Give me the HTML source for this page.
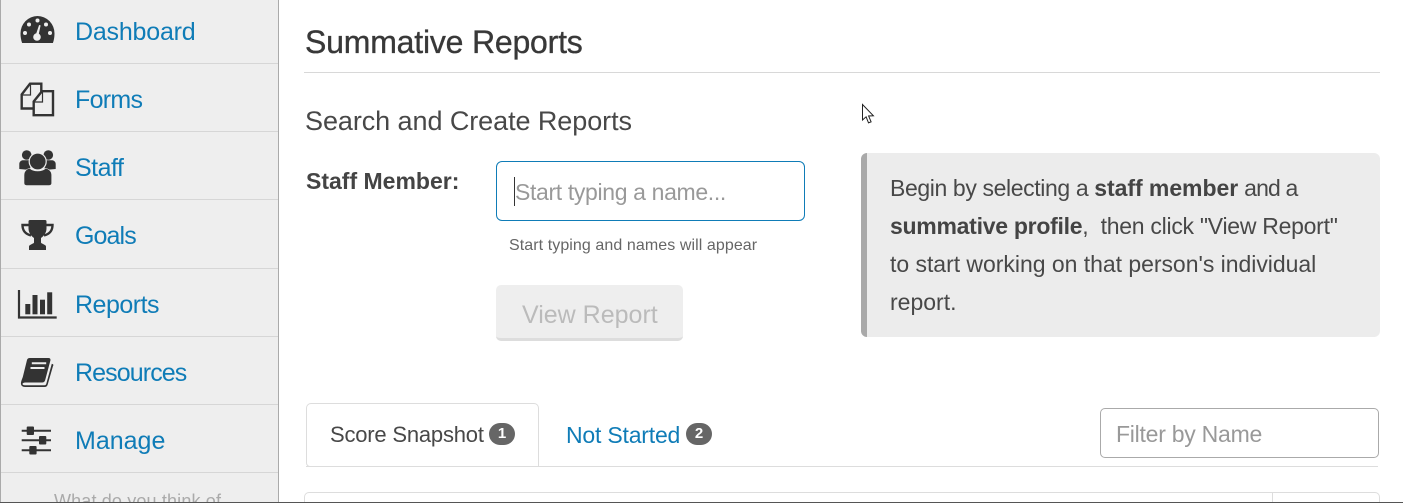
<!DOCTYPE html>
<html lang="en">
<head>
<meta charset="utf-8">
<title>Summative Reports</title>
<style>
html,body{margin:0;padding:0;background:#fff;width:1403px;height:503px;overflow:hidden}
#root{position:relative;width:1403px;height:503px;overflow:hidden;font-family:"Liberation Sans",Arial,sans-serif;color:#444}
.b{position:absolute;box-sizing:border-box}
.t{position:absolute;line-height:30px;height:30px;white-space:nowrap}
.nav{font-size:25px;color:#0f7cb7;left:75px}
.sep{position:absolute;left:1px;width:277px;height:1px;background:#d6d6d6}
.c{font-size:23px;left:890px;color:#484848}
.c b{color:#444}
svg{position:absolute;left:0;top:0}
</style>
</head>
<body>
<div id="root">
<div class="b" style="left:0;top:0;width:279px;height:503px;background:#eee;border-left:1px solid #aaa;border-right:1px solid #aaa"></div>
<div class="sep" style="top:63px"></div>
<div class="sep" style="top:131px"></div>
<div class="sep" style="top:199px"></div>
<div class="sep" style="top:268px"></div>
<div class="sep" style="top:336px"></div>
<div class="sep" style="top:404px"></div>
<div class="sep" style="top:472px"></div>

<a class="t nav" style="top:17px;letter-spacing:-.2px">Dashboard</a>
<a class="t nav" style="top:85px;letter-spacing:-.7px">Forms</a>
<a class="t nav" style="top:153px;letter-spacing:-.5px">Staff</a>
<a class="t nav" style="top:221px;letter-spacing:-.9px">Goals</a>
<a class="t nav" style="top:290px;letter-spacing:-.5px">Reports</a>
<a class="t nav" style="top:358px;letter-spacing:-.9px">Resources</a>
<a class="t nav" style="top:426px">Manage</a>
<div class="t" style="left:54px;top:486px;font-size:18px;color:#aaa;letter-spacing:.15px">What do you think of</div>

<svg width="279" height="503" viewBox="0 0 279 503">
 <!-- Dashboard -->
 <path d="M20.500 33.500a17 17.500 0 0 1 34 0c0 3.500-.6 6.800-1.600 9.500H22.100c-1-2.700-1.600-6-1.600-9.500z" fill="#333"/>
 <g fill="#eee"><circle cx="29" cy="24.500" r="2"/><circle cx="37.500" cy="20.500" r="2"/><circle cx="46" cy="24.500" r="2"/><circle cx="25" cy="33" r="2"/><circle cx="50" cy="33" r="2"/><circle cx="37" cy="37" r="3.800"/><path d="M35.700 35l3.400-10 1.500.4-2.200 10.400z"/></g>
 <!-- Forms -->
 <g fill="none" stroke="#333" stroke-width="2.400">
  <path d="M21.700 94.500L30 83.700h11.300v24.800H21.700z"/>
  <path d="M33.700 101.500L42 91.200h11v24h-19.300z" fill="#eee"/>
  <path d="M22 95h8.500v-11M34 102h8.500V91.500" stroke-width="1.200"/>
 </g>
 <!-- Staff -->
 <g fill="#333">
  <circle cx="26.700" cy="155" r="4.800"/><circle cx="48.300" cy="155" r="4.800"/>
  <path d="M19.300 169v-5c0-2.500 2-3.800 4-3.800h7v9.800zM55.700 169v-5c0-2.500-2-3.800-4-3.800h-7v9.800z"/>
 </g>
 <circle cx="37.700" cy="161.500" r="8.500" fill="#333" stroke="#eee" stroke-width="1.200"/>
 <path d="M24 183v-8c0-4 3-6.500 6-6.500 2 1.700 4.700 2.500 7.700 2.500s5.700-.8 7.700-2.500c3 0 6.300 2.500 6.300 6.500v8c0 1.500-1 2.500-2.500 2.500h-22.700c-1.500 0-2.500-1-2.500-2.500z" fill="#333" stroke="#eee" stroke-width=".6"/>
 <!-- Trophy -->
 <path d="M28.500 221.500c0-1 .6-1.500 1.500-1.500h15c1 0 1.500.5 1.500 1.500v7c0 5-3.500 8-5.500 9.500v4.500c0 1.300 5 2 5 4v3.500H29v-3.500c0-2 5-2.700 5-4V238c-2-1.500-5.500-4.500-5.500-9.500z" fill="#333"/>
 <path d="M29.500 225h-7c0 6 3 9 8.500 10.500M45.500 225h7c0 6-3 9-8.500 10.500" fill="none" stroke="#333" stroke-width="2.400"/>
 <!-- Reports -->
 <path d="M19 290v27.500h37.700" fill="none" stroke="#333" stroke-width="2.200"/>
 <g fill="#333"><rect x="25.300" y="304" width="5" height="10.300"/><rect x="32.500" y="295" width="5" height="19.300"/><rect x="40" y="299.700" width="5" height="14.600"/><rect x="47.200" y="292.300" width="5" height="22"/></g>
 <!-- Book -->
 <path d="M29.800 358h18.700c1.600 0 2.200 1 1.900 2.500l-5.200 19.500c-.4 1.500-1.300 2.500-3 2.500H25.500c-2 0-3 .7-3 1.500s1 1.200 2.500 1.200h19.500c1 0 1.500-.5 1.800-1.500l5.500-20 1.200.5c.5.500.5 1-.2 2.500l-5 17.500c-.5 1.800-1.500 2.800-3.300 2.800H25c-2.800 0-4.500-1.700-4-4.500.2-1.300 1-3.500 1.800-5.500L27 360c.4-1.300 1.300-2 2.800-2z" fill="#333"/>
 <path d="M31.800 363.300h14.400M30.500 368h14" stroke="#eee" stroke-width="2" fill="none"/>
 <!-- Manage -->
 <g stroke="#333" stroke-width="2" fill="none"><path d="M21.700 430.700H51M21.700 440.300H51M21.700 450.300H51"/></g>
 <g fill="#333"><rect x="26.700" y="426.500" width="7.300" height="8.500" rx="1"/><rect x="39" y="436" width="7.300" height="8.500" rx="1"/><rect x="29.300" y="446" width="7.300" height="8.500" rx="1"/></g>
</svg>

<!-- Header -->
<div class="t" style="left:305px;top:27px;font-size:32px;color:#383838;letter-spacing:-.2px;-webkit-text-stroke:.35px #383838">Summative Reports</div>
<div class="b" style="left:304px;top:72px;width:1076px;height:1px;background:#d8d8d8"></div>
<div class="t" style="left:305px;top:106px;font-size:27px;letter-spacing:-.07px;color:#484848">Search and Create Reports</div>

<!-- Form -->
<div class="t" style="left:306px;top:166px;font-size:23px;font-weight:bold">Staff Member:</div>
<div class="b" style="left:496px;top:161px;width:309px;height:60px;border:1px solid #0f7cb7;border-radius:6px;background:#fff"></div>
<div class="b" style="left:514px;top:177px;width:1px;height:29px;background:#333"></div>
<div class="t" style="left:515px;top:177px;font-size:23px;color:#999;letter-spacing:-.35px">Start typing a name...</div>
<div class="t" style="left:509px;top:231px;font-size:16px;color:#666;letter-spacing:.08px">Start typing and names will appear</div>
<div class="b" style="left:496px;top:285px;width:187px;height:56px;background:#eee;border-bottom:3px solid #ddd;border-radius:5px"></div>
<div class="t" style="left:522px;top:300px;font-size:25px;color:#bbb">View Report</div>

<!-- Callout -->
<div class="b" style="left:861px;top:153px;width:519px;height:184px;background:#ececec;border-left:6px solid #a9a9a9;border-radius:6px"></div>
<div class="t c" style="top:173px;letter-spacing:-.38px">Begin by selecting a <b style="letter-spacing:-.05px">staff member</b> <span style="letter-spacing:-.85px">and a</span></div>
<div class="t c" style="top:211px;letter-spacing:-.27px"><b>summative profile</b>,&nbsp; then click "View Report"</div>
<div class="t c" style="top:249px;letter-spacing:-.03px">to start working on that person's individual</div>
<div class="t c" style="top:287px">report.</div>

<!-- Cursor -->
<svg style="left:860px;top:102px" width="18" height="24" viewBox="0 0 18 24"><path d="M2.500 2.500v15.500l3.600-3.200 2.400 6 2.600-1-2.500-5.800 4.800-.2z" fill="#fff" stroke="#222" stroke-width="1"/></svg>

<!-- Tabs -->
<div class="b" style="left:306px;top:466px;width:1072px;height:1px;background:#ddd"></div>
<div class="b" style="left:306px;top:403px;width:233px;height:64px;background:#fff;border:1px solid #ddd;border-radius:5px 5px 0 4px"></div>
<div class="t" style="left:330px;top:420px;font-size:22px;letter-spacing:-.2px;color:#484848">Score Snapshot</div>
<div class="b" style="left:489px;top:423px;width:26px;height:22px;border-radius:11px;background:#666;color:#fff;font-size:15px;font-weight:bold;line-height:22px;text-align:center">1</div>
<div class="t" style="left:566px;top:420px;font-size:23px;letter-spacing:-.2px;color:#0f7cb7">Not Started</div>
<div class="b" style="left:686px;top:423px;width:26px;height:22px;border-radius:11px;background:#666;color:#fff;font-size:15px;font-weight:bold;line-height:22px;text-align:center">2</div>
<div class="b" style="left:1100px;top:408px;width:279px;height:50px;border:1px solid #aaa;border-radius:5px;background:#fff"></div>
<div class="t" style="left:1116px;top:419px;font-size:23px;color:#999;letter-spacing:-.25px">Filter by Name</div>

<!-- Panel -->
<div class="b" style="left:304px;top:492px;width:1076px;height:11px;border:1px solid #ddd;border-bottom:0;border-radius:5px 5px 0 0"></div>
<div class="b" style="left:1272px;top:492px;width:1px;height:11px;background:#ddd"></div>
<div class="b" style="left:0;top:502px;width:1403px;height:1px;background:#555"></div>
</div>
</body>
</html>
